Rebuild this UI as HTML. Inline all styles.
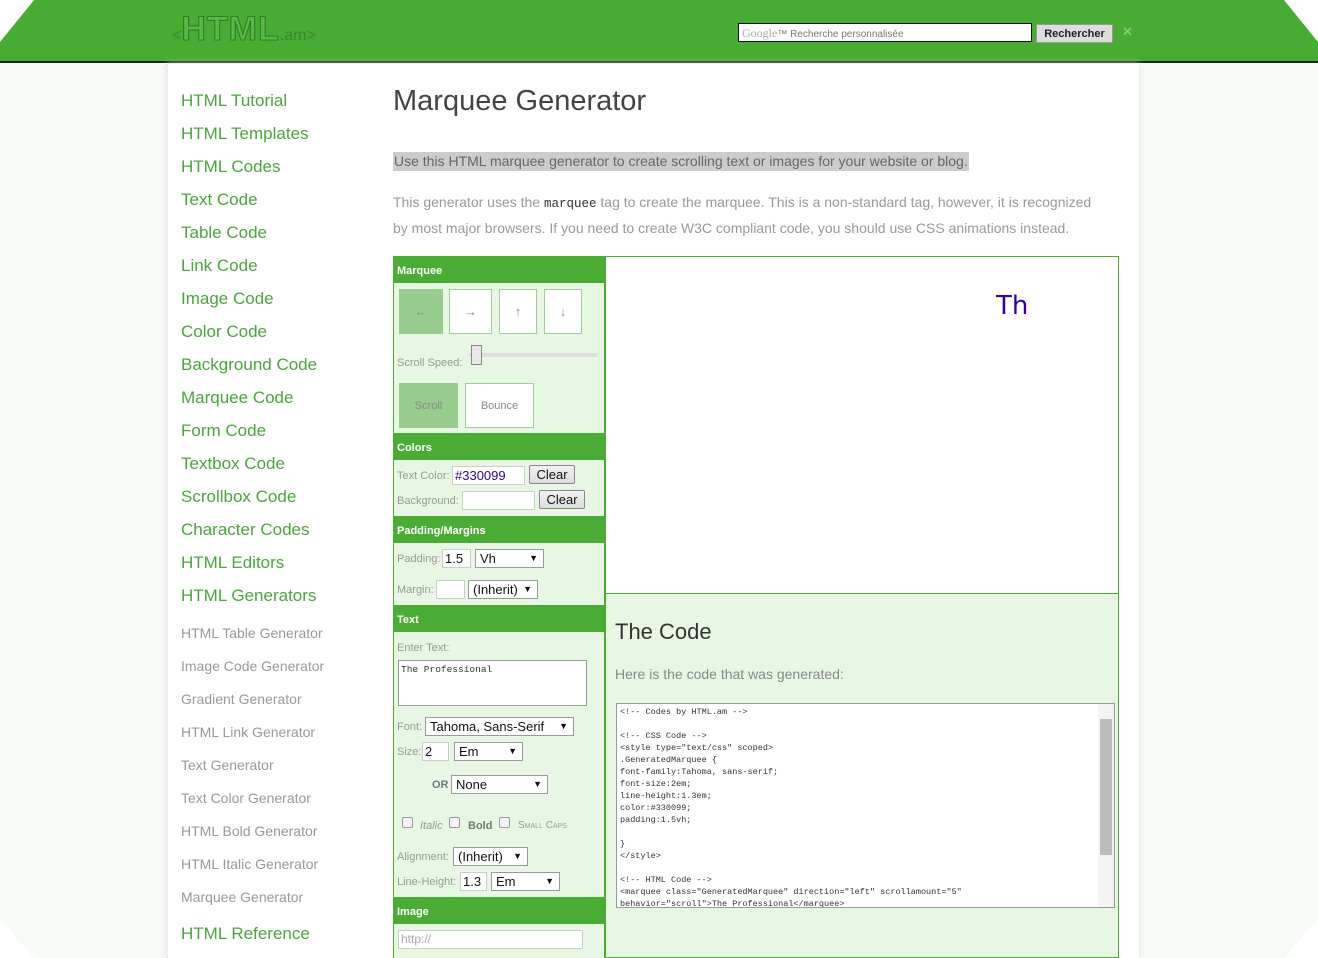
<!DOCTYPE html>
<html><head><meta charset="utf-8"><style>
*{box-sizing:border-box;margin:0;padding:0}
body{width:1318px;height:958px;overflow:hidden;background:#f7fbf6;font-family:"Liberation Sans",sans-serif;position:relative}
.hdr{position:absolute;left:0;top:0;width:1318px;height:63px;background:#48ab33;border-bottom:2px solid #1a2a14}
.logo{position:absolute;left:172px;top:10px;color:#3c8a2c;font-size:16px}
.logo b{font-size:34px;letter-spacing:1px;color:#58b845;-webkit-text-stroke:1px #2f7a22;font-weight:bold}
.srch{position:absolute;left:738px;top:23px;width:294px;height:19px;background:#fff;border:1px solid #111;font-size:10px;color:#777;padding:2px 3px;white-space:nowrap}
.srch span{font-family:"Liberation Serif",serif;color:#aaa;font-size:12px}
.btn{position:absolute;left:1036px;top:24px;width:77px;height:19px;background:#ddd;border:1px solid #999;font-size:11px;font-weight:bold;text-align:center;line-height:18px;color:#222}
.x{position:absolute;left:1122px;top:24px;color:#9bd08d;font-size:13px}
.wrap{position:absolute;left:167px;top:64px;width:972px;height:894px;background:#fff;box-shadow:0 0 6px #ddd;border-left:1px dotted #ddd}
.side{position:absolute;left:181px;top:88px}
.side a{display:block;color:#4ba53c;font-size:17px;height:33px;line-height:26px;text-decoration:none}
.side a.s{color:#999;font-size:14px}
h1{position:absolute;left:393px;top:85px;font-weight:normal;font-size:29px;color:#444}
.hl{position:absolute;left:393px;top:152px;background:#ccc;color:#666;font-size:14px;padding:1px 1px;height:19px}
.p{position:absolute;left:393px;top:189px;width:712px;color:#999;font-size:14px;line-height:26px}
.p code{font-family:"Liberation Mono",monospace;color:#333;font-size:12.5px;line-height:1}
.lp{position:absolute;left:393px;top:256px;width:212px;height:702px;background:#e7f7e3;border-left:1px solid #4aac34;border-right:1px solid #4aac34;font-size:11px;color:#999}
.bar{position:absolute;left:0;width:211px;height:27px;background:#4aac34;color:#fff;font-weight:bold;font-size:11px;padding:9px 3px 0}
.ab{position:absolute;height:45px;border:1px solid #9fcf95;background:#fff;color:#888;text-align:center;line-height:44px;font-size:13px}
.ab.on{background:#98cc8e;border-color:#98cc8e}
.lbl{position:absolute;left:3px}
.in{position:absolute;height:19px;border:1px solid #ccc;background:#fff;font-size:13px;color:#111;padding:0 2px;line-height:17px}
.sel{position:absolute;height:19px;border:1px solid #999;background:#fff;font-size:13px;color:#111;padding:0 4px;line-height:17px}
.sel:after{content:"▼";position:absolute;right:5px;top:0;font-size:9px}
.cb{position:absolute;height:19px;border:1px solid #888;background:linear-gradient(#f2f2f2,#ddd);font-size:13px;color:#111;text-align:center;line-height:17px;border-radius:2px}
.rp{position:absolute;left:605px;top:256px;width:514px;height:702px;border:1px solid #4aac34;background:#e7f7e3}
.prev{position:absolute;left:0;top:0;width:512px;height:337px;background:#fff;border-bottom:1px solid #4aac34}
.code{position:absolute;left:10px;top:446px;width:499px;height:205px;background:#fff;border:1px solid #999;font-family:"Liberation Mono",monospace;font-size:8.5px;line-height:12px;color:#333;padding:2px 3px;white-space:pre;overflow:hidden}
.sb{position:absolute;right:0;top:0;width:16px;height:203px;background:#f3f3f3}
.sb i{position:absolute;left:2px;top:15px;width:12px;height:136px;background:#bbb}
.tri{position:absolute;width:0;height:0}
</style></head><body>
<div class="hdr">
<div class="logo">&lt;<b>HTML</b>.am&gt;</div>
<div class="srch"><span>Google</span>™ Recherche personnalisée</div>
<div class="btn">Rechercher</div><div class="x">✕</div>
</div>
<div class="tri" style="left:0;top:0;border-top:42px solid #fff;border-right:34px solid transparent"></div>
<div class="tri" style="right:0;top:0;border-top:42px solid #fff;border-left:34px solid transparent"></div>
<div class="wrap"></div>
<div class="tri" style="left:0;bottom:0;border-bottom:40px solid #fff;border-right:34px solid transparent"></div>
<div class="tri" style="right:0;bottom:0;border-bottom:40px solid #fff;border-left:34px solid transparent"></div>
<div class="side">
<a>HTML Tutorial</a><a>HTML Templates</a><a>HTML Codes</a><a>Text Code</a><a>Table Code</a><a>Link Code</a><a>Image Code</a><a>Color Code</a><a>Background Code</a><a>Marquee Code</a><a>Form Code</a><a>Textbox Code</a><a>Scrollbox Code</a><a>Character Codes</a><a>HTML Editors</a><a>HTML Generators</a>
<a class="s" style="margin-top:4px">HTML Table Generator</a><a class="s">Image Code Generator</a><a class="s">Gradient Generator</a><a class="s">HTML Link Generator</a><a class="s">Text Generator</a><a class="s">Text Color Generator</a><a class="s">HTML Bold Generator</a><a class="s">HTML Italic Generator</a><a class="s">Marquee Generator</a><a style="margin-top:4px">HTML Reference</a>
</div>
<h1>Marquee Generator</h1>
<div class="hl">Use this HTML marquee generator to create scrolling text or images for your website or blog.</div>
<div class="p">This generator uses the <code>marquee</code> tag to create the marquee. This is a non-standard tag, however, it is recognized by most major browsers. If you need to create W3C compliant code, you should use CSS animations instead.</div>
<div class="lp">
<div class="bar" style="top:0">Marquee</div>
<div class="ab on" style="left:5px;top:33px;width:44px">←</div>
<div class="ab" style="left:55px;top:33px;width:43px">→</div>
<div class="ab" style="left:105px;top:33px;width:38px">↑</div>
<div class="ab" style="left:150px;top:33px;width:38px">↓</div>
<div class="lbl" style="top:101px">Scroll Speed:</div>
<div style="position:absolute;left:75px;top:97px;width:128px;height:4px;background:#ddd"></div>
<div style="position:absolute;left:77px;top:89px;width:11px;height:20px;background:#e8e8e8;border:1px solid #888"></div>
<div class="ab on" style="left:5px;top:127px;width:59px;font-size:11px">Scroll</div>
<div class="ab" style="left:71px;top:127px;width:69px;font-size:11px">Bounce</div>
<div class="bar" style="top:177px">Colors</div>
<div class="lbl" style="top:214px">Text Color:</div>
<div class="in" style="left:58px;top:210px;width:73px;color:#330099">#330099</div>
<div class="cb" style="left:135px;top:209px;width:46px">Clear</div>
<div class="lbl" style="top:239px">Background:</div>
<div class="in" style="left:68px;top:235px;width:73px"></div>
<div class="cb" style="left:145px;top:234px;width:46px">Clear</div>
<div class="bar" style="top:260px">Padding/Margins</div>
<div class="lbl" style="top:297px">Padding:</div>
<div class="in" style="left:48px;top:293px;width:29px">1.5</div>
<div class="sel" style="left:81px;top:293px;width:69px">Vh</div>
<div class="lbl" style="top:328px">Margin:</div>
<div class="in" style="left:42px;top:324px;width:29px"></div>
<div class="sel" style="left:74px;top:324px;width:70px">(Inherit)</div>
<div class="bar" style="top:349px">Text</div>
<div class="lbl" style="top:386px">Enter Text:</div>
<div style="position:absolute;left:4px;top:404px;width:189px;height:46px;background:#fff;border:1px solid #999;font-family:'Liberation Mono',monospace;font-size:9.5px;color:#333;padding:3px 2px">The Professional</div>
<div class="lbl" style="top:465px">Font:</div>
<div class="sel" style="left:31px;top:461px;width:149px">Tahoma, Sans-Serif</div>
<div class="lbl" style="top:490px">Size:</div>
<div class="in" style="left:28px;top:486px;width:27px">2</div>
<div class="sel" style="left:60px;top:486px;width:69px">Em</div>
<div style="position:absolute;left:38px;top:523px;font-weight:bold;color:#777">OR</div>
<div class="sel" style="left:57px;top:519px;width:97px">None</div>
<div style="position:absolute;left:8px;top:561px;width:11px;height:11px;border:1px solid #999;background:#f3f3f3;border-radius:2px"></div>
<div style="position:absolute;left:26px;top:564px;font-style:italic">Italic</div>
<div style="position:absolute;left:55px;top:561px;width:11px;height:11px;border:1px solid #999;background:#f3f3f3;border-radius:2px"></div>
<div style="position:absolute;left:74px;top:564px;font-weight:bold;color:#777">Bold</div>
<div style="position:absolute;left:105px;top:561px;width:11px;height:11px;border:1px solid #999;background:#f3f3f3;border-radius:2px"></div>
<div style="position:absolute;left:124px;top:564px;font-variant:small-caps;font-size:10px">Small Caps</div>
<div class="lbl" style="top:595px">Alignment:</div>
<div class="sel" style="left:59px;top:591px;width:75px">(Inherit)</div>
<div class="lbl" style="top:620px">Line-Height:</div>
<div class="in" style="left:66px;top:616px;width:27px">1.3</div>
<div class="sel" style="left:97px;top:616px;width:69px">Em</div>
<div class="bar" style="top:641px">Image</div>
<div class="in" style="left:4px;top:674px;width:185px;color:#aaa;font-size:12px">http://</div>
</div>
<div class="rp">
<div class="prev"><div style="position:absolute;left:390px;top:34px;font-size:26px;color:#330099;font-family:'DejaVu Sans',sans-serif">Th</div></div>
<div style="position:absolute;left:9px;top:362px;font-size:22px;color:#333">The Code</div>
<div style="position:absolute;left:9px;top:409px;font-size:14px;color:#888">Here is the code that was generated:</div>
<div class="code">&lt;!-- Codes by HTML.am --&gt;

&lt;!-- CSS Code --&gt;
&lt;style type="text/css" scoped&gt;
.GeneratedMarquee {
font-family:Tahoma, sans-serif;
font-size:2em;
line-height:1.3em;
color:#330099;
padding:1.5vh;

}
&lt;/style&gt;

&lt;!-- HTML Code --&gt;
&lt;marquee class="GeneratedMarquee" direction="left" scrollamount="5"
behavior="scroll"&gt;The Professional&lt;/marquee&gt;<div class="sb"><i></i></div></div>
</div>
</body></html>
